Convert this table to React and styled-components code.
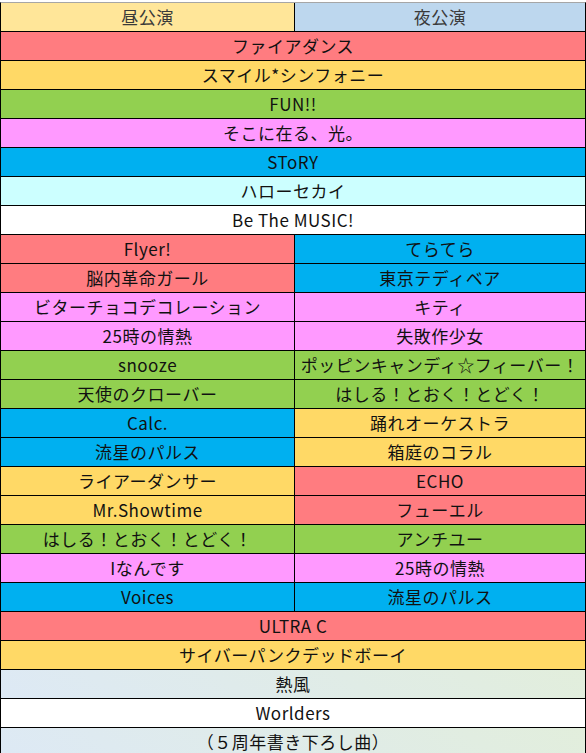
import styled, { createGlobalStyle } from 'styled-components';

const GlobalStyle = createGlobalStyle`
	html, body {
		margin: 0;
		padding: 0;
		background: #fff;
	}
	body {
		font-family: "Noto Sans CJK JP", "Noto Sans", sans-serif;
	}
`;

const COLORS = {
	red: '#ff7c80',
	yellow: '#ffd966',
	green: '#92d050',
	pink: '#ff99ff',
	blue: '#00b0f0',
	cyan: '#ccffff',
	white: '#ffffff',
	mist: 'linear-gradient(35deg, #dde9f5 0%, #e2eedc 100%)',
};

// 公演セットリスト（昼 / 夜）
const ROWS = [
	{ both: 'ファイアダンス', color: 'red' },
	{ both: 'スマイル*シンフォニー', color: 'yellow' },
	{ both: 'FUN!!', color: 'green' },
	{ both: 'そこに在る、光。', color: 'pink' },
	{ both: 'SToRY', color: 'blue' },
	{ both: 'ハローセカイ', color: 'cyan' },
	{ both: 'Be The MUSIC!', color: 'white' },
	{ day: ['Flyer!', 'red'], night: ['てらてら', 'blue'] },
	{ day: ['脳内革命ガール', 'red'], night: ['東京テディベア', 'blue'] },
	{ day: ['ビターチョコデコレーション', 'pink'], night: ['キティ', 'pink'] },
	{ day: ['25時の情熱', 'pink'], night: ['失敗作少女', 'pink'] },
	{ day: ['snooze', 'green'], night: ['ポッピンキャンディ☆フィーバー！', 'green'] },
	{ day: ['天使のクローバー', 'green'], night: ['はしる！とおく！とどく！', 'green'] },
	{ day: ['Calc.', 'blue'], night: ['踊れオーケストラ', 'yellow'] },
	{ day: ['流星のパルス', 'blue'], night: ['箱庭のコラル', 'yellow'] },
	{ day: ['ライアーダンサー', 'yellow'], night: ['ECHO', 'red'] },
	{ day: ['Mr.Showtime', 'yellow'], night: ['フューエル', 'red'] },
	{ day: ['はしる！とおく！とどく！', 'green'], night: ['アンチユー', 'green'] },
	{ day: ['Iなんです', 'pink'], night: ['25時の情熱', 'pink'] },
	{ day: ['Voices', 'blue'], night: ['流星のパルス', 'blue'] },
	{ both: 'ULTRA C', color: 'red' },
	{ both: 'サイバーパンクデッドボーイ', color: 'yellow' },
	{ both: '熱風', color: 'mist' },
	{ both: 'Worlders', color: 'white' },
	{ both: '（５周年書き下ろし曲）', color: 'mist' },
];

const Sheet = styled.div`
	width: 586px;
	height: 753px;
	overflow: hidden;
	box-sizing: border-box;
	padding-top: 2px;
`;

const Grid = styled.div`
	display: grid;
	grid-template-columns: 294px 1fr;
	grid-auto-rows: 29px;
	border-top: 1px solid #a6a6a6;
	border-left: 1px solid #000;
	border-right: 1px solid #000;
`;

const Cell = styled.div`
	grid-column: ${({ $wide }) => ($wide ? '1 / span 2' : 'auto')};
	display: flex;
	align-items: center;
	justify-content: center;
	box-sizing: border-box;
	border-bottom: 1px solid #000;
	border-right: ${({ $left }) => ($left ? '1px solid #000' : 'none')};
	background: ${({ $bg }) => $bg};
	color: ${({ $muted }) => ($muted ? '#3a3a3a' : '#111')};
	font-size: 17px;
	letter-spacing: 0.5px;
	line-height: 1;
	padding-bottom: 2px;
	white-space: nowrap;
`;

export default function App() {
	return (
		<>
			<GlobalStyle />
			<Sheet>
				<Grid>
					<Cell $left $bg="#ffe699" $muted>
						昼公演
					</Cell>
					<Cell $bg="#bdd7ee" $muted>
						夜公演
					</Cell>
					{ROWS.map((row, i) =>
						row.both ? (
							<Cell key={i} $wide $bg={COLORS[row.color]}>
								{row.both}
							</Cell>
						) : (
							[
								<Cell key={`${i}-d`} $left $bg={COLORS[row.day[1]]}>
									{row.day[0]}
								</Cell>,
								<Cell key={`${i}-n`} $bg={COLORS[row.night[1]]}>
									{row.night[0]}
								</Cell>,
							]
						),
					)}
				</Grid>
			</Sheet>
		</>
	);
}
